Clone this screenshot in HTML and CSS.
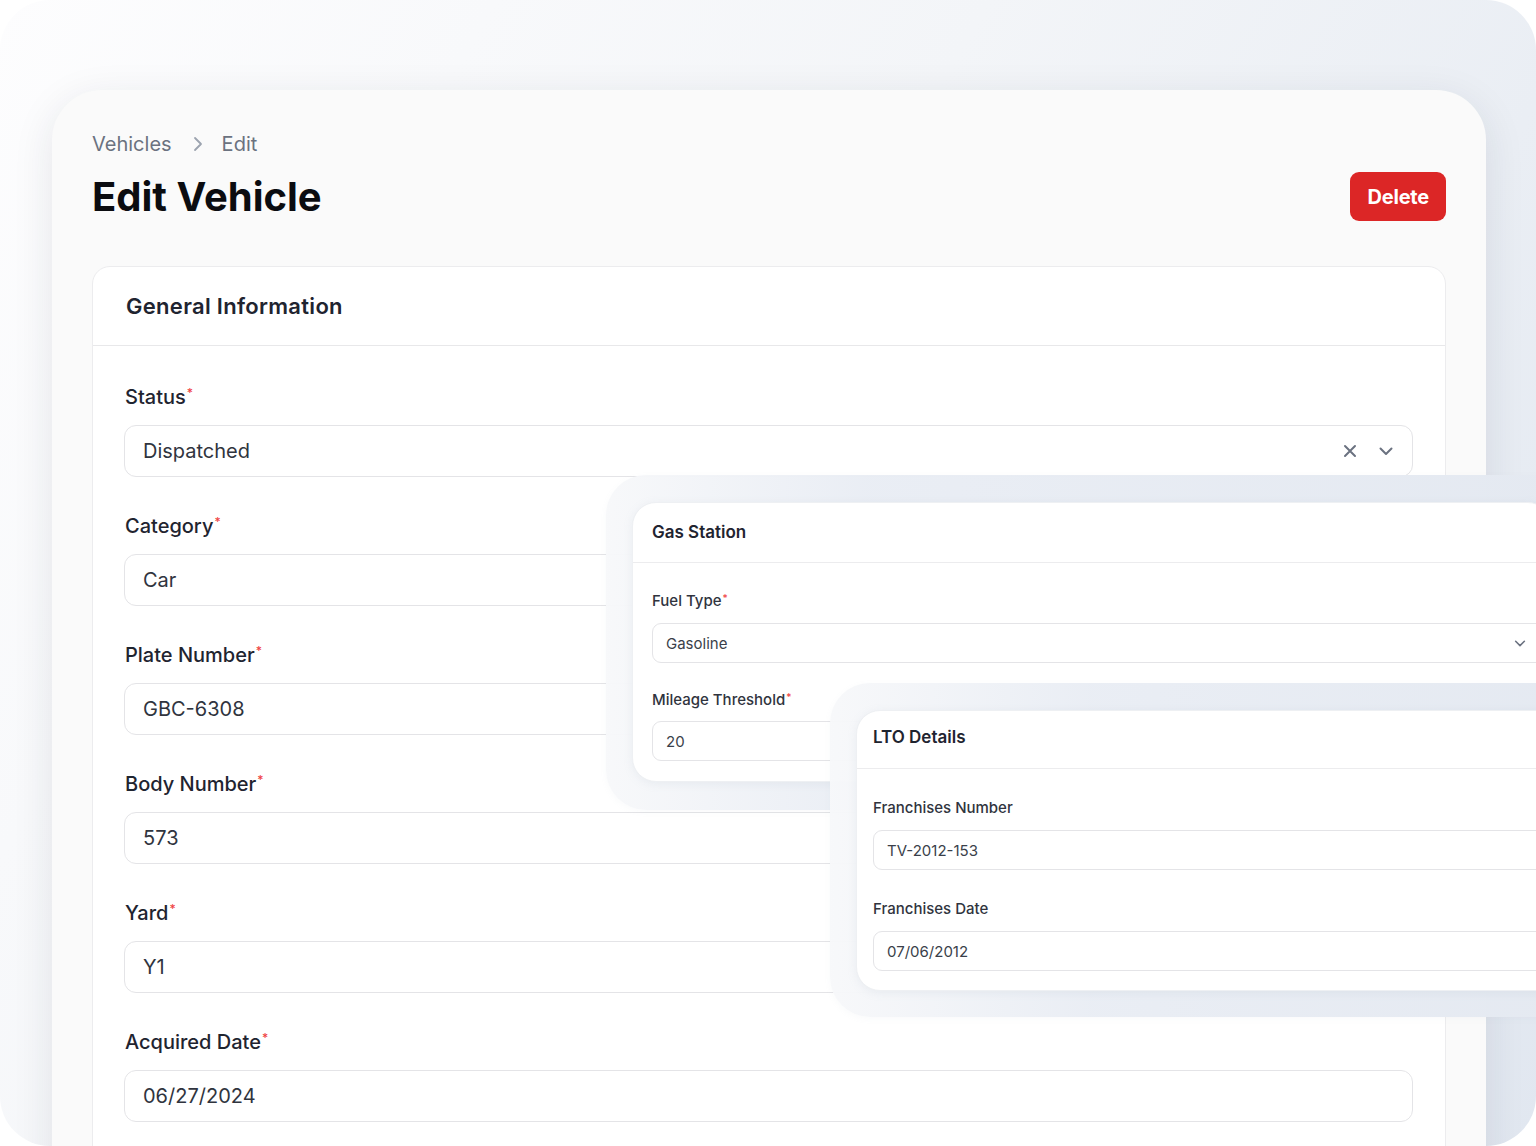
FILE: index.html
```html
<!DOCTYPE html>
<html lang="en">
<head>
<meta charset="utf-8">
<title>Edit Vehicle</title>
<link rel="stylesheet" href="styles.css">
</head>
<body>
<div class="screen">
  <main class="panel">
    <nav class="crumbs">
      <span>Vehicles</span>
      <svg class="crumb-sep" viewBox="0 0 10 16" width="10" height="16"><polyline points="2,2 8,8 2,14" fill="none" stroke="#9ca3af" stroke-width="1.8" stroke-linecap="round" stroke-linejoin="round"/></svg>
      <span>Edit</span>
    </nav>
    <div class="title-row">
      <h1 class="title">Edit Vehicle</h1>
      <button class="btn-danger" type="button">Delete</button>
    </div>

    <section class="card">
      <header class="card-head">General Information</header>
      <div class="card-body">
        <div class="field">
          <label class="label">Status<sup class="req">*</sup></label>
          <div class="input select">
            <span class="value">Dispatched</span>
            <span class="select-icons">
              <svg viewBox="0 0 16 16" width="16" height="16"><path d="M3 3 L13 13 M13 3 L3 13" stroke="#6b7280" stroke-width="2" stroke-linecap="round"/></svg>
              <svg viewBox="0 0 16 16" width="16" height="16"><polyline points="2.5,5.5 8,11 13.5,5.5" fill="none" stroke="#6b7280" stroke-width="2" stroke-linecap="round" stroke-linejoin="round"/></svg>
            </span>
          </div>
        </div>
        <div class="field">
          <label class="label">Category<sup class="req">*</sup></label>
          <div class="input"><span class="value">Car</span></div>
        </div>
        <div class="field">
          <label class="label">Plate Number<sup class="req">*</sup></label>
          <div class="input"><span class="value">GBC-6308</span></div>
        </div>
        <div class="field">
          <label class="label">Body Number<sup class="req">*</sup></label>
          <div class="input"><span class="value">573</span></div>
        </div>
        <div class="field">
          <label class="label">Yard<sup class="req">*</sup></label>
          <div class="input"><span class="value">Y1</span></div>
        </div>
        <div class="field">
          <label class="label">Acquired Date<sup class="req">*</sup></label>
          <div class="input"><span class="value">06/27/2024</span></div>
        </div>
      </div>
    </section>
  </main>

  <!-- floating detail cards -->
  <div class="float float-gas">
    <section class="mini-card mini-gas">
      <header class="mini-head">Gas Station</header>
      <div class="mini-body">
        <div class="mini-field">
          <label class="mini-label">Fuel Type<sup class="req">*</sup></label>
          <div class="mini-input select">
            <span>Gasoline</span>
            <svg viewBox="0 0 16 16" width="14" height="14"><polyline points="3,6 8,11 13,6" fill="none" stroke="#6b7280" stroke-width="1.8" stroke-linecap="round" stroke-linejoin="round"/></svg>
          </div>
        </div>
        <div class="mini-field mileage">
          <label class="mini-label">Mileage Threshold<sup class="req">*</sup></label>
          <div class="mini-input"><span>20</span></div>
        </div>
      </div>
    </section>
  </div>

  <div class="float float-lto">
    <section class="mini-card mini-lto">
      <header class="mini-head">LTO Details</header>
      <div class="mini-body">
        <div class="mini-field">
          <label class="mini-label">Franchises Number</label>
          <div class="mini-input"><span>TV-2012-153</span></div>
        </div>
        <div class="mini-field">
          <label class="mini-label">Franchises Date</label>
          <div class="mini-input"><span>07/06/2012</span></div>
        </div>
      </div>
    </section>
  </div>
</div>
</body>
</html>
```

FILE: styles.css
```css
* {
  box-sizing: border-box;
}

html, body {
  margin: 0;
  padding: 0;
  background: #ffffff;
}

body {
  font-family: Inter, "Noto Sans", "Liberation Sans", sans-serif;
  color: #1f2430;
}

.screen {
  position: relative;
  width: 1536px;
  height: 1146px;
  overflow: hidden;
  border-radius: 50px;
  background: linear-gradient(120deg, #fdfdfe 0%, #f3f5f8 45%, #e1e7f0 100%);
}

/* main page panel */
.panel {
  margin: 90px 50px 0 52px;
  height: 1100px;
  padding: 42px 40px 0;
  background: #fafafa;
  border-radius: 50px 50px 0 0;
  box-shadow: 0 10px 40px rgba(30, 41, 59, 0.10);
}

.crumbs {
  display: flex;
  align-items: center;
  gap: 19px;
  height: 24px;
  font-size: 20px;
  line-height: 24px;
  color: #6b7280;
}

.crumb-sep {
  display: block;
  margin-left: 2px;
}

.title-row {
  display: flex;
  align-items: center;
  justify-content: space-between;
  margin-top: 16px;
  height: 49px;
}

.title {
  margin: 0;
  font-size: 40px;
  line-height: 48px;
  font-weight: 700;
  color: #0b0c10;
}

.btn-danger {
  height: 49px;
  padding: 0 17px;
  border: 0;
  border-radius: 9px;
  background: #dc2626;
  color: #ffffff;
  font-family: inherit;
  font-size: 20px;
  font-weight: 700;
  letter-spacing: -0.2px;
}

/* form card */
.card {
  margin-top: 45px;
  height: 900px;
  background: #ffffff;
  border: 1px solid #ececee;
  border-radius: 18px 18px 0 0;
}

.card-head {
  display: flex;
  align-items: center;
  height: 79px;
  padding: 0 33px;
  border-bottom: 1.5px solid #e8e8ea;
  font-size: 22px;
  font-weight: 600;
  letter-spacing: 0.3px;
  color: #1f2430;
}

.card-body {
  display: flex;
  flex-direction: column;
  gap: 37px;
  padding: 39px 32px 0 31px;
}

.field {
  display: flex;
  flex-direction: column;
}

.label {
  display: block;
  height: 24px;
  margin: 0 0 16px 1px;
  font-size: 20px;
  line-height: 24px;
  font-weight: 500;
  color: #1f2430;
}

.req {
  color: #ef4444;
  font-size: 12px;
  vertical-align: top;
  position: relative;
  top: -4px;
  margin-left: 1px;
}

.input {
  display: flex;
  align-items: center;
  height: 52px;
  padding: 0 18px;
  background: #ffffff;
  border: 1.5px solid #e4e4e7;
  border-radius: 12px;
  font-size: 20px;
  color: #30343e;
}

.input.select {
  justify-content: space-between;
  padding-right: 18px;
}

.select-icons {
  display: flex;
  align-items: center;
  gap: 20px;
}

.select-icons svg {
  display: block;
}

/* floating detail cards */
.float {
  position: absolute;
  border-radius: 40px;
  background: linear-gradient(90deg, rgba(247, 248, 250, 0.96) 0px, rgba(233, 237, 244, 0.97) 260px, #e4e9f1 100%);
  box-shadow: 0 2px 6px rgba(148, 163, 184, 0.06);
}

.float-gas {
  left: 606px;
  top: 475px;
  width: 1000px;
  height: 335px;
  padding: 27px 0 0 26px;
}

.float-lto {
  left: 830px;
  top: 683px;
  width: 800px;
  height: 334px;
  padding: 27px 0 0 26px;
}

.mini-card {
  background: #ffffff;
  border: 1px solid #eef0f3;
  border-radius: 24px;
  box-shadow: 0 2px 10px rgba(148, 163, 184, 0.12);
}

.mini-gas {
  width: 920px;
  height: 280px;
}

.mini-lto {
  width: 760px;
  height: 281px;
}

.mini-head {
  display: flex;
  align-items: center;
  border-bottom: 1.5px solid #ececee;
  font-size: 17px;
  font-weight: 600;
  color: #1f2430;
}

.mini-gas .mini-head {
  height: 60px;
  padding: 0 19px 2px;
}

.mini-lto .mini-head {
  height: 58px;
  padding: 0 16px 6px;
}

.mini-body {
  display: flex;
  flex-direction: column;
}

.mini-gas .mini-body {
  gap: 28px;
  padding: 29px 0 0 19px;
}

.mini-lto .mini-body {
  gap: 30px;
  padding: 30px 0 0 16px;
}

.mini-field {
  display: flex;
  flex-direction: column;
}

.mini-label {
  display: block;
  height: 18px;
  margin-bottom: 13px;
  font-size: 15px;
  line-height: 18px;
  font-weight: 500;
  color: #30343e;
}

.mileage .mini-label {
  margin-bottom: 12px;
}

.mini-label .req {
  font-size: 10px;
  top: -3px;
}

.mini-input {
  display: flex;
  align-items: center;
  justify-content: space-between;
  width: 900px;
  height: 40px;
  padding: 0 18px 0 13px;
  border: 1.5px solid #e4e4e7;
  border-radius: 9px;
  font-size: 15px;
  color: #3a3f4a;
}

.mini-gas .mini-input {
  width: 894px;
}

.mini-input svg {
  display: block;
}
```
